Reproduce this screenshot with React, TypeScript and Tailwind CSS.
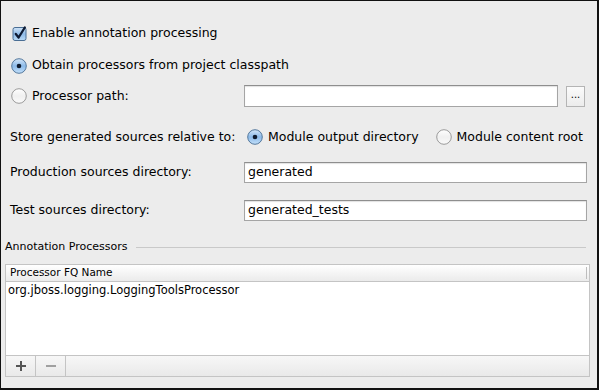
import React from "react";

const font = { fontFamily: '"DejaVu Sans", "Liberation Sans", sans-serif' };

function Checkbox() {
  return (
    <svg width="15" height="15" viewBox="0 0 15 15" className="shrink-0 overflow-visible">
      <defs>
        <linearGradient id="cbg" x1="0" y1="0" x2="0" y2="1">
          <stop offset="0" stopColor="#cfe3f7" />
          <stop offset="0.5" stopColor="#8fbbe8" />
          <stop offset="1" stopColor="#b9daf6" />
        </linearGradient>
      </defs>
      <rect x="1" y="1.5" width="13" height="13" rx="2" fill="url(#cbg)" stroke="#4a6e94" />
      <path d="M3.8 8 L6.6 11.5 L12.8 1.5" fill="none" stroke="#0d1a33" strokeWidth="2.3" strokeLinecap="round" strokeLinejoin="round" />
    </svg>
  );
}

function Radio({ on }: { on?: boolean }) {
  const id = on ? "rgon" : "rgoff";
  return (
    <svg width="16" height="16" viewBox="0 0 16 16" className="shrink-0">
      <defs>
        <linearGradient id={id} x1="0" y1="0" x2="0" y2="1">
          {on ? (
            <>
              <stop offset="0" stopColor="#d4e6f8" />
              <stop offset="0.5" stopColor="#8cbae9" />
              <stop offset="1" stopColor="#c3e0fa" />
            </>
          ) : (
            <>
              <stop offset="0" stopColor="#ffffff" />
              <stop offset="0.5" stopColor="#f0f0f0" />
              <stop offset="1" stopColor="#fafafa" />
            </>
          )}
        </linearGradient>
      </defs>
      <circle cx="8" cy="8" r="7.3" fill={`url(#${id})`} stroke={on ? "#54789c" : "#9a9a9a"} strokeWidth="1" />
      {on && <circle cx="8" cy="8" r="2.3" fill="#0f1b2e" />}
    </svg>
  );
}

function TextField({ value, className }: { value?: string; className?: string }) {
  return (
    <div
      className={`h-[21px] bg-white border border-[#a5a5a5] border-t-[#8e8e8e] shadow-[inset_0_1px_1px_rgba(0,0,0,0.12)] flex items-center pl-[3px] text-[12.5px] text-black ${className ?? ""}`}
    >
      {value}
    </div>
  );
}

export default function App() {
  return (
    <div
      style={font}
      className="w-[599px] h-[390px] bg-[#ececec] border-t border-l border-r-2 border-b-2 border-[#111] flex flex-col text-[12.5px] text-black overflow-hidden"
    >
      {/* Row 1 */}
      <div className="mt-[19px] h-[27px] flex items-center pl-[11px]">
        <Checkbox />
        <span className="ml-[5px]">Enable annotation processing</span>
      </div>
      {/* Row 2 */}
      <div className="h-[37px] flex items-center pl-[10px]">
        <Radio on />
        <span className="ml-[5px]">Obtain processors from project classpath</span>
      </div>
      {/* Row 3 */}
      <div className="h-[24px] flex items-center pl-[10px] pr-[12px]">
        <div className="w-[233px] flex items-center">
          <Radio />
          <span className="ml-[5px]">Processor path:</span>
        </div>
        <TextField className="flex-1 h-[22px]" />
        <div className="ml-[8px] w-[19px] h-[21px] border border-[#b4b4b4] bg-gradient-to-b from-[#fbfbfb] to-[#ececec] flex items-center justify-center text-[10px] leading-none pb-[3px]">
          ...
        </div>
      </div>
      {/* Row 4 */}
      <div className="mt-[20px] h-[18px] flex items-center pl-[9px]">
        <div className="w-[237px]">Store generated sources relative to:</div>
        <Radio on />
        <span className="ml-[5px]">Module output directory</span>
        <div className="ml-[17px]">
          <Radio />
        </div>
        <span className="ml-[5px]">Module content root</span>
      </div>
      {/* Row 5 */}
      <div className="mt-[16px] h-[21px] flex items-center pl-[9px] pr-[10px]">
        <div className="w-[234px]">Production sources directory:</div>
        <TextField className="flex-1" value="generated" />
      </div>
      {/* Row 6 */}
      <div className="mt-[17px] h-[21px] flex items-center pl-[9px] pr-[10px]">
        <div className="w-[234px]">Test sources directory:</div>
        <TextField className="flex-1" value="generated_tests" />
      </div>
      {/* Group title */}
      <div className="mt-[18px] h-[16px] flex items-center pl-[4px] pr-[11px] text-[11px]">
        <span>Annotation Processors</span>
        <div className="flex-1 ml-[8px] h-px bg-[#c9c9c9]" />
      </div>
      {/* Table */}
      <div className="mt-[9px] ml-[4px] w-[585px] h-[113px] border border-[#c4c4c4] bg-white flex flex-col">
        <div className="h-[17px] bg-gradient-to-b from-[#ffffff] to-[#ebebeb] border-b border-[#c4c4c4] flex items-center pl-[4px] text-[10.5px] relative">
          Processor FQ Name
          <div className="absolute right-[2px] top-[2px] w-px h-[12px] bg-[#bdbdbd]" />
        </div>
        <div className="flex-1 pl-[2px] text-[11.5px] leading-[16px]">
          org.jboss.logging.LoggingToolsProcessor
        </div>
        <div className="h-[21px] border-t border-[#c4c4c4] bg-gradient-to-b from-[#f7f7f7] to-[#e9e9e9] flex">
          <div className="w-[30px] border-r border-[#c4c4c4] flex items-center justify-center">
            <svg width="10" height="10" viewBox="0 0 10 10">
              <path d="M5 0 V10 M0 5 H10" stroke="#555" strokeWidth="2" />
            </svg>
          </div>
          <div className="w-[30px] border-r border-[#c4c4c4] flex items-center justify-center">
            <svg width="10" height="10" viewBox="0 0 10 10">
              <path d="M0 5 H10" stroke="#a0a0a0" strokeWidth="2" />
            </svg>
          </div>
        </div>
      </div>
    </div>
  );
}
